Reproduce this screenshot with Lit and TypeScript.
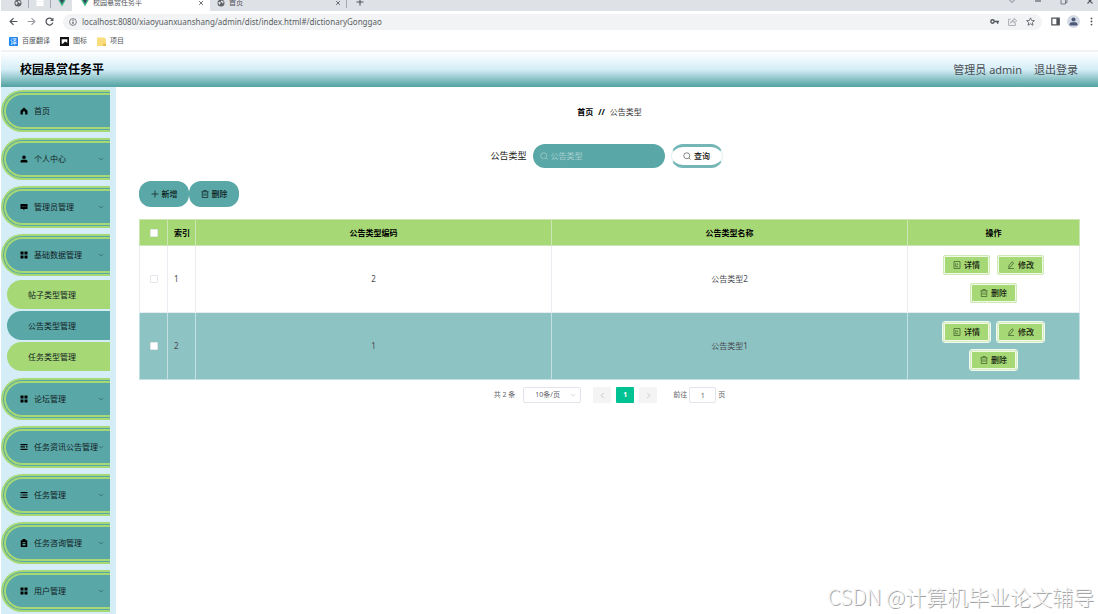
import { LitElement, html, css, svg, nothing } from "lit";
import { customElement, property } from "lit/decorators.js";

const glyphs: Record<string, unknown> = {
  home: svg`<path fill="currentColor" d="M8 1 1 7.4V15h4.6v-4.2a2.4 2.4 0 0 1 4.8 0V15H15V7.4z"/>`,
  user: svg`<circle cx="8" cy="4.6" r="3.6" fill="currentColor"/><path fill="currentColor" d="M1 15v-2.2C1 10.400 3.400 9.400 5 9.400h6c1.600 0 4 1 4 3.400V15z"/>`,
  chat: svg`<path fill="currentColor" d="M1 2h14v10H9.500L7 15v-3H1z"/><path stroke="#5aa7a7" stroke-width="1.200" stroke-dasharray="1.500 1.500" d="M4 7h8"/>`,
  grid: svg`<path fill="currentColor" d="M1 1h6v6H1zM9 1h6v6H9zM1 9h6v6H1zM9 9h6v6H9z"/>`,
  list: svg`<path fill="currentColor" d="M1 2h14v2.500H1zM1 6.500h9V9H1zM12 6.500h3V9h-3zM1 11.500h14V14H1z"/>`,
  rows: svg`<path fill="currentColor" d="M1 2h14v2.500H1zM1 7h2v2H1zM4.500 7H15v2H4.500zM1 11.500h14V14H1z"/>`,
  clip: svg`<path fill="currentColor" fill-rule="evenodd" d="M5 0h6v2.500h3.500V16h-13V2.500H5zM5 6v1.500h6V6zm0 3.500V13h6V9.500z"/>`,
  down: svg`<path class="line" d="m2 5 6 6 6-6"/>`,
  left: svg`<path class="line" d="M11 2 5 8l6 6"/>`,
  right: svg`<path class="line" d="m5 2 6 6-6 6"/>`,
  search: svg`<circle class="line" cx="7.500" cy="7.500" r="6"/><path class="line" d="m12 12 3 3"/>`,
  plus: svg`<path class="line" d="M8 1v14M1 8h14"/>`,
  trash: svg`<path class="line" d="M1 3.500h14M5.500 3V1h5v2M2.500 3.500V15h11V3.500M6 6.500v5.500M10 6.500v5.500"/>`,
  doc: svg`<path class="line" d="M2 1h12v14H2zM5.500 4v7.500h5M9 5v3"/>`,
  edit: svg`<path class="line" d="m4 9 6-7.500 3 2.200L7.500 11.500 3.500 13zM2 15h12"/>`,
  globe: svg`<circle cx="8" cy="8" r="7" fill="#5f6368"/><path fill="#dee1e6" d="M3 6c2-1 4 0 4.500 1.500S5 9 6 12C4 11 2.500 9 3 6zM9 3l3.500 1.500C13.500 6 13 8 12 9c-2 0-1-2-3-2.500S8 4 9 3z"/>`,
  page: svg`<path fill="#fff" d="M1 2h14v12H1z"/><path stroke="#e8eaee" d="M3 5h10"/>`,
  vue: svg`<path fill="#41b883" d="M0 1h16L8 15z"/><path fill="#35495e" d="M3.200 1h9.600L8 9.500z"/>`,
  close: svg`<path class="line bold" d="m3 3 10 10M13 3 3 13"/>`,
  add: svg`<path class="line bold" d="M8 1v14M1 8h14"/>`,
  minus: svg`<path class="line bold" d="M2 8h12"/>`,
  restore: svg`<path class="line" d="M2 5h9v9H2zM5 5V2h9v9h-3"/>`,
  back: svg`<path class="line bold" d="M15 8H2M8 2 2 8l6 6"/>`,
  forward: svg`<path class="line bold" d="M1 8h13M8 2l6 6-6 6"/>`,
  reload: svg`<path class="line bold" d="M13.500 5A6.200 6.200 0 1 0 14 10"/><path fill="currentColor" d="M15 1v6H9z"/>`,
  info: svg`<circle class="line" cx="8" cy="8" r="6.800"/><path class="line bold" d="M8 7v5M8 3.500v1.800"/>`,
  key: svg`<circle cx="4.500" cy="8" r="3" fill="none" stroke="currentColor" stroke-width="2.500"/><path stroke="currentColor" stroke-width="2.500" d="M8 8h8M13.500 8v4"/>`,
  share: svg`<path class="line" d="M5 4H1v11h12v-4M4.500 11C5 7 8 5.500 11 5.500V2.500L15.500 7 11 11V8C8 8 6 9 4.500 11z"/>`,
  star: svg`<path class="line" d="m8 1.500 2 4.600 5 .4-3.800 3.300 1.200 4.900L8 12l-4.400 2.700 1.200-4.900L1 6.500l5-.4z"/>`,
  panel: svg`<path class="line bold" d="M1.500 2h13v12h-13z"/><path fill="currentColor" d="M9.500 2H15v12H9.500z"/>`,
  dots: svg`<circle cx="8" cy="2.500" r="1.600" fill="currentColor"/><circle cx="8" cy="8" r="1.600" fill="currentColor"/><circle cx="8" cy="13.500" r="1.600" fill="currentColor"/>`,
  logo: svg`<path fill="#111" d="M0 0h16v16H0z"/><path fill="#fff" d="M3 4h10v6l-4-2-4 4H3z"/>`,
  folder: svg`<path fill="#f9dc7c" d="M0 1h13l3 3v12H0z"/><path fill="#e8bd4b" d="M11 12h5v4h-5z"/>`,
};

@customElement("ui-icon")
class UiIcon extends LitElement {
  @property() name = "";
  static styles = css`
    :host { display: inline-flex; flex: none; width: 8px; height: 8px; }
    svg { width: 100%; height: 100%; display: block; }
    .line { fill: none; stroke: currentColor; stroke-width: 1.4; }
    .bold { stroke-width: 2.2; }
  `;
  render() {
    return html`<svg viewBox="0 0 16 16" aria-hidden="true">${glyphs[this.name] ?? nothing}</svg>`;
  }
}

@customElement("browser-bar")
class BrowserBar extends LitElement {
  static styles = css`
    :host { display: block; color: #50545a; font-size: 7px; line-height: 12px; }
    button { font: inherit; color: inherit; background: none; border: 0; padding: 0; display: flex; align-items: center; justify-content: center; }
    a { color: inherit; text-decoration: none; display: flex; align-items: center; gap: 4px; }
    .strip { height: 11px; overflow: hidden; display: flex; align-items: flex-end; background: #dee1e6; }
    .tab { height: 16px; display: flex; align-items: center; gap: 4px; flex: none; box-sizing: border-box; }
    .pinned { width: 21px; justify-content: center; }
    .lead { width: 27px; padding-left: 6px; }
    .split { border-left: 1px solid #a5a9b0; height: 12px; margin-bottom: 3px; }
    .active { width: 138px; background: #fff; padding: 0 6px 0 9px; border-radius: 5px 5px 0 0; }
    .other { width: 136px; padding: 0 5px 0 7px; }
    .title { flex: 1; font-size: 7px; }
    .small { width: 6px; height: 6px; }
    .new { width: 26px; height: 18px; }
    .window { margin-left: auto; display: flex; gap: 18px; padding-right: 4px; height: 20px; align-items: center; }
    .tools { height: 21px; display: flex; align-items: center; gap: 9px; padding: 0 2px 0 8px; }
    .tools .nav { width: 9px; }
    .tools ui-icon { width: 9px; height: 9px; }
    .tools .dim { color: #9a9da1; }
    .address { flex: 1; min-width: 0; height: 16px; display: flex; align-items: center; gap: 9px; background: #f1f3f4; border-radius: 8px; padding: 0 7px 0 6px; }
    .address .info { width: 8px; height: 8px; }
    .url { flex: 1; min-width: 0; background: none; border: 0; padding: 0; margin-left: -4px; font: 8px/12px "Noto Sans", sans-serif; color: #5b5f64; }
    .tools .avatar { width: 13px; height: 13px; border-radius: 50%; background: #d5dbe5; color: #4a5a78; margin: 0 -2px; }
    .marks { height: 18px; display: flex; align-items: center; gap: 10px; padding-left: 8px; border-bottom: 2px solid #f1f2f3; }
    .fanyi { width: 9px; height: 9px; line-height: 9px; background: #1d84f0; color: #fff; text-align: center; border-radius: 1px; }
    .marks ui-icon { width: 9px; height: 9px; }
  `;
  render() {
    return html`
      <div class="strip">
        <div class="tab pinned lead"><ui-icon name="globe"></ui-icon></div>
        <div class="split"></div>
        <div class="tab pinned"><ui-icon name="page"></ui-icon></div>
        <div class="split"></div>
        <div class="tab pinned"><ui-icon name="vue"></ui-icon></div>
        <div class="tab active"><ui-icon name="vue"></ui-icon><span class="title">校园悬赏任务平</span>
          <button aria-label="关闭"><ui-icon class="small" name="close"></ui-icon></button></div>
        <div class="tab other"><ui-icon name="globe"></ui-icon><span class="title">首页</span>
          <button aria-label="关闭"><ui-icon class="small" name="close"></ui-icon></button></div>
        <div class="split"></div>
        <button class="new" aria-label="新标签页"><ui-icon name="add"></ui-icon></button>
        <div class="window">
          ${["down", "minus", "restore", "close"].map((n) => html`<button aria-label=${n}><ui-icon name=${n}></ui-icon></button>`)}
        </div>
      </div>
      <div class="tools">
        <button class="nav" aria-label="后退"><ui-icon name="back"></ui-icon></button>
        <button class="nav dim" aria-label="前进"><ui-icon name="forward"></ui-icon></button>
        <button class="nav" aria-label="刷新"><ui-icon name="reload"></ui-icon></button>
        <div class="address">
          <ui-icon class="info" name="info"></ui-icon>
          <input class="url" aria-label="地址" .value=${"localhost:8080/xiaoyuanxuanshang/admin/dist/index.html#/dictionaryGonggao"} />
          <button aria-label="密码"><ui-icon name="key"></ui-icon></button>
          <button class="dim" aria-label="分享"><ui-icon name="share"></ui-icon></button>
          <button aria-label="收藏"><ui-icon name="star"></ui-icon></button>
        </div>
        <button aria-label="侧边栏"><ui-icon name="panel"></ui-icon></button>
        <button class="avatar" aria-label="用户"><ui-icon name="user"></ui-icon></button>
        <button aria-label="菜单"><ui-icon name="dots"></ui-icon></button>
      </div>
      <nav class="marks">
        <a href="#"><span class="fanyi">译</span>百度翻译</a>
        <a href="#"><ui-icon name="logo"></ui-icon>图标</a>
        <a href="#"><ui-icon name="folder"></ui-icon>项目</a>
      </nav>
    `;
  }
}

interface Entry { label: string; icon: string; leaf?: boolean; children?: string[]; }

const menu: Entry[] = [
  { label: "首页", icon: "home", leaf: true },
  { label: "个人中心", icon: "user" },
  { label: "管理员管理", icon: "chat" },
  { label: "基础数据管理", icon: "grid", children: ["帖子类型管理", "公告类型管理", "任务类型管理"] },
  { label: "论坛管理", icon: "grid" },
  { label: "任务资讯公告管理", icon: "list" },
  { label: "任务管理", icon: "rows" },
  { label: "任务咨询管理", icon: "clip" },
  { label: "用户管理", icon: "grid" },
];

@customElement("side-menu")
class SideMenu extends LitElement {
  static styles = css`
    :host { display: block; background: #d5edf7; padding: 3px 6px 2px 0; }
    nav { display: flex; flex-direction: column; gap: 6px; }
    a { color: #10201f; text-decoration: none; }
    .item { box-sizing: border-box; height: 42px; display: flex; align-items: center; gap: 6px; padding: 0 6px 0 14px;
      background: #5aa7a7; border: 5px double #a6d876; border-right: 0; border-radius: 21px 0 0 21px; white-space: nowrap; }
    .item ui-icon { color: #000; }
    .label { flex: 1; min-width: 0; }
    .item .arrow { width: 6px; height: 6px; color: #244948; }
    .sub { display: flex; flex-direction: column; gap: 2px; padding: 4px 0 1px 6px; }
    .child { height: 29px; line-height: 29px; padding-left: 21px; background: #a6d876; border-radius: 15px 0 0 15px; }
    .child.current { background: #5aa7a7; }
  `;
  render() {
    return html`<nav>
      ${menu.map((m) => html`<div>
        <a class="item" href="#"><ui-icon name=${m.icon}></ui-icon><span class="label">${m.label}</span>
          ${m.leaf ? nothing : html`<ui-icon class="arrow" name="down"></ui-icon>`}</a>
        ${m.children ? html`<div class="sub">${m.children.map((c, i) => html`<a class="child ${i === 1 ? "current" : ""}" href="#">${c}</a>`)}</div>` : nothing}
      </div>`)}
    </nav>`;
  }
}

@customElement("type-table")
class TypeTable extends LitElement {
  static styles = css`
    :host { display: block; }
    table { width: 100%; table-layout: fixed; border-collapse: collapse; color: #484b50; }
    .narrow { width: 28px; }
    .ops { width: 172px; }
    th, td { border: 1px solid #e9edf2; padding: 0; text-align: center; }
    th { height: 25px; background: #a6d876; color: #000; border-color: #cbe6b4; }
    td { height: 66px; }
    .tinted td { background: #8ec3c3; border-color: #c3e0e2; }
    .start { text-align: left; padding-left: 6px; white-space: nowrap; }
    input { appearance: none; box-sizing: border-box; display: block; width: 8px; height: 8px; margin: 0 auto; background: #fff; border: 1px solid #e3e6ea; border-radius: 1px; }
    .actions { display: flex; flex-wrap: wrap; justify-content: center; gap: 8px 7px; padding: 0 32px; }
    button { box-sizing: border-box; width: 47px; height: 20px; padding: 0; display: flex; align-items: center; justify-content: center; gap: 3px;
      font: inherit; font-weight: 500; color: #14200c; background: #a6d876; border: 1px solid #cfeab6; box-shadow: inset 0 0 0 1px #f0f9e6; border-radius: 2px; }
    .tinted button { border-color: #d8efc4; outline: 1px solid #f2faf0; }
    button ui-icon { width: 8px; height: 8px; color: #3c5a2a; }
  `;
  render() {
    const rows = [
      { index: 1, code: "2", name: "公告类型2" },
      { index: 2, code: "1", name: "公告类型1" },
    ];
    const actions = [["doc", "详情"], ["edit", "修改"], ["trash", "删除"]];
    return html`<table>
      <colgroup><col class="narrow" /><col class="narrow" /><col /><col /><col class="ops" /></colgroup>
      <thead><tr>
        <th><input type="checkbox" aria-label="全选" /></th>
        <th class="start">索引</th><th>公告类型编码</th><th>公告类型名称</th><th>操作</th>
      </tr></thead>
      <tbody>${rows.map((r) => html`<tr class=${r.index % 2 ? "" : "tinted"}>
        <td><input type="checkbox" aria-label="选择 ${r.index}" /></td>
        <td class="start">${r.index}</td><td>${r.code}</td><td>${r.name}</td>
        <td><div class="actions">${actions.map(([icon, text]) => html`<button><ui-icon name=${icon}></ui-icon>${text}</button>`)}</div></td>
      </tr>`)}</tbody>
    </table>`;
  }
}

@customElement("app-root")
class AppRoot extends LitElement {
  static styles = css`
    :host { display: flex; flex-direction: column; position: relative; min-height: 100vh; box-sizing: border-box; padding-left: 1px; overflow: hidden;
      background: #fff; color: #222; font: 8px/12px "Noto Sans", "Noto Sans CJK SC", sans-serif; }
    button, input, select { font: inherit; }
    .top { height: 35px; display: flex; align-items: center; justify-content: space-between; padding: 0 20px 0 19px;
      background: linear-gradient(#fff 0%, #d5edf7 50%, #5aa7a7 96%); }
    h1 { margin: 0; font-size: 12px; line-height: 16px; color: #000; }
    .account { display: flex; gap: 12px; font-size: 11px; line-height: 16px; color: #4a4f54; }
    .account a { color: inherit; text-decoration: none; }
    .body { flex: 1; display: grid; grid-template-columns: 115px 1fr; }
    main { min-width: 0; padding: 19px 18px 0 23px; }
    .crumbs { display: flex; justify-content: center; gap: 5px; color: #333; }
    .crumbs b { color: #000; }
    .filter { display: flex; justify-content: center; align-items: center; gap: 6px; margin-top: 26px; padding-right: 6px; }
    .filter label { font-size: 9px; }
    .box { box-sizing: border-box; width: 132px; height: 24px; display: flex; align-items: center; gap: 3px; padding: 0 7px; border-radius: 12px; background: #5aa7a7; color: #a9cfd0; }
    .box input { flex: 1; min-width: 0; border: 0; padding: 0; background: none; outline: 0; }
    .box input::placeholder { color: #a9cfd0; opacity: 1; }
    .query { box-sizing: border-box; width: 52px; height: 24px; padding: 0; display: flex; align-items: center; justify-content: center; gap: 3px;
      background: #fff; border: 1px solid #5aa7a7; border-width: 3px 1px; border-color: #74b6b6 #e6f2f2; border-radius: 12px; color: #111; font-weight: 500; }
    .query ui-icon { color: #555; }
    .bar { display: flex; margin: 13px 0 12px; }
    .round { width: 50px; height: 26px; padding: 0; border: 0; border-radius: 12px; background: #5aa7a7; color: #0c1c1c; font-weight: 500; display: flex; align-items: center; justify-content: center; gap: 3px; }
    .pager { display: flex; justify-content: center; align-items: center; margin-top: 7px; font-size: 7px; color: #606266; }
    .size { display: flex; align-items: center; box-sizing: border-box; width: 58px; height: 16px; margin: 0 12px 0 8px; padding: 0 4px 0 11px; border: 1px solid #e1e4ea; border-radius: 2px; }
    .size select { flex: 1; min-width: 0; appearance: none; border: 0; padding: 0; background: none; color: inherit; }
    .size ui-icon { width: 6px; height: 6px; color: #b5b9c1; }
    .pages { display: flex; gap: 5px; margin-right: 16px; }
    .pages button { width: 18px; height: 16px; padding: 0; border: 0; border-radius: 1px; background: #f4f4f5; color: #a9acb3; display: flex; align-items: center; justify-content: center; }
    .pages .on { background: #00c292; color: #fff; font-weight: bold; }
    .pages ui-icon { width: 7px; height: 7px; }
    .jump { display: flex; align-items: center; gap: 2px; }
    .jump input { box-sizing: border-box; width: 27px; height: 16px; padding: 0; text-align: center; border: 1px solid #e1e4ea; border-radius: 2px; color: inherit; }
    .mark { position: absolute; right: 4px; bottom: 4px; font: 21px/28px "Noto Sans CJK SC", sans-serif; font-weight: 300; color: #f4f4f4; text-shadow: 1px 1px 0 #a6a6a6; white-space: nowrap; }
  `;
  render() {
    return html`
      <browser-bar></browser-bar>
      <header class="top">
        <h1>校园悬赏任务平</h1>
        <div class="account"><span>管理员 admin</span><a href="#">退出登录</a></div>
      </header>
      <div class="body">
        <side-menu></side-menu>
        <main>
          <div class="crumbs"><b>首页</b><b>//</b><span>公告类型</span></div>
          <form class="filter" @submit=${(e: Event) => e.preventDefault()}>
            <label for="kind">公告类型</label>
            <div class="box"><ui-icon name="search"></ui-icon><input id="kind" placeholder="公告类型" /></div>
            <button class="query"><ui-icon name="search"></ui-icon>查询</button>
          </form>
          <div class="bar">
            <button class="round"><ui-icon name="plus"></ui-icon>新增</button>
            <button class="round"><ui-icon name="trash"></ui-icon>删除</button>
          </div>
          <type-table></type-table>
          <div class="pager">
            <span>共 2 条</span>
            <div class="size"><select aria-label="每页条数"><option>10条/页</option></select><ui-icon name="down"></ui-icon></div>
            <div class="pages">
              <button aria-label="上一页"><ui-icon name="left"></ui-icon></button>
              <button class="on">1</button>
              <button aria-label="下一页"><ui-icon name="right"></ui-icon></button>
            </div>
            <div class="jump"><label for="page">前往</label><input id="page" .value=${"1"} /><span>页</span></div>
          </div>
        </main>
      </div>
      <div class="mark">CSDN @计算机毕业论文辅导</div>
    `;
  }
}
